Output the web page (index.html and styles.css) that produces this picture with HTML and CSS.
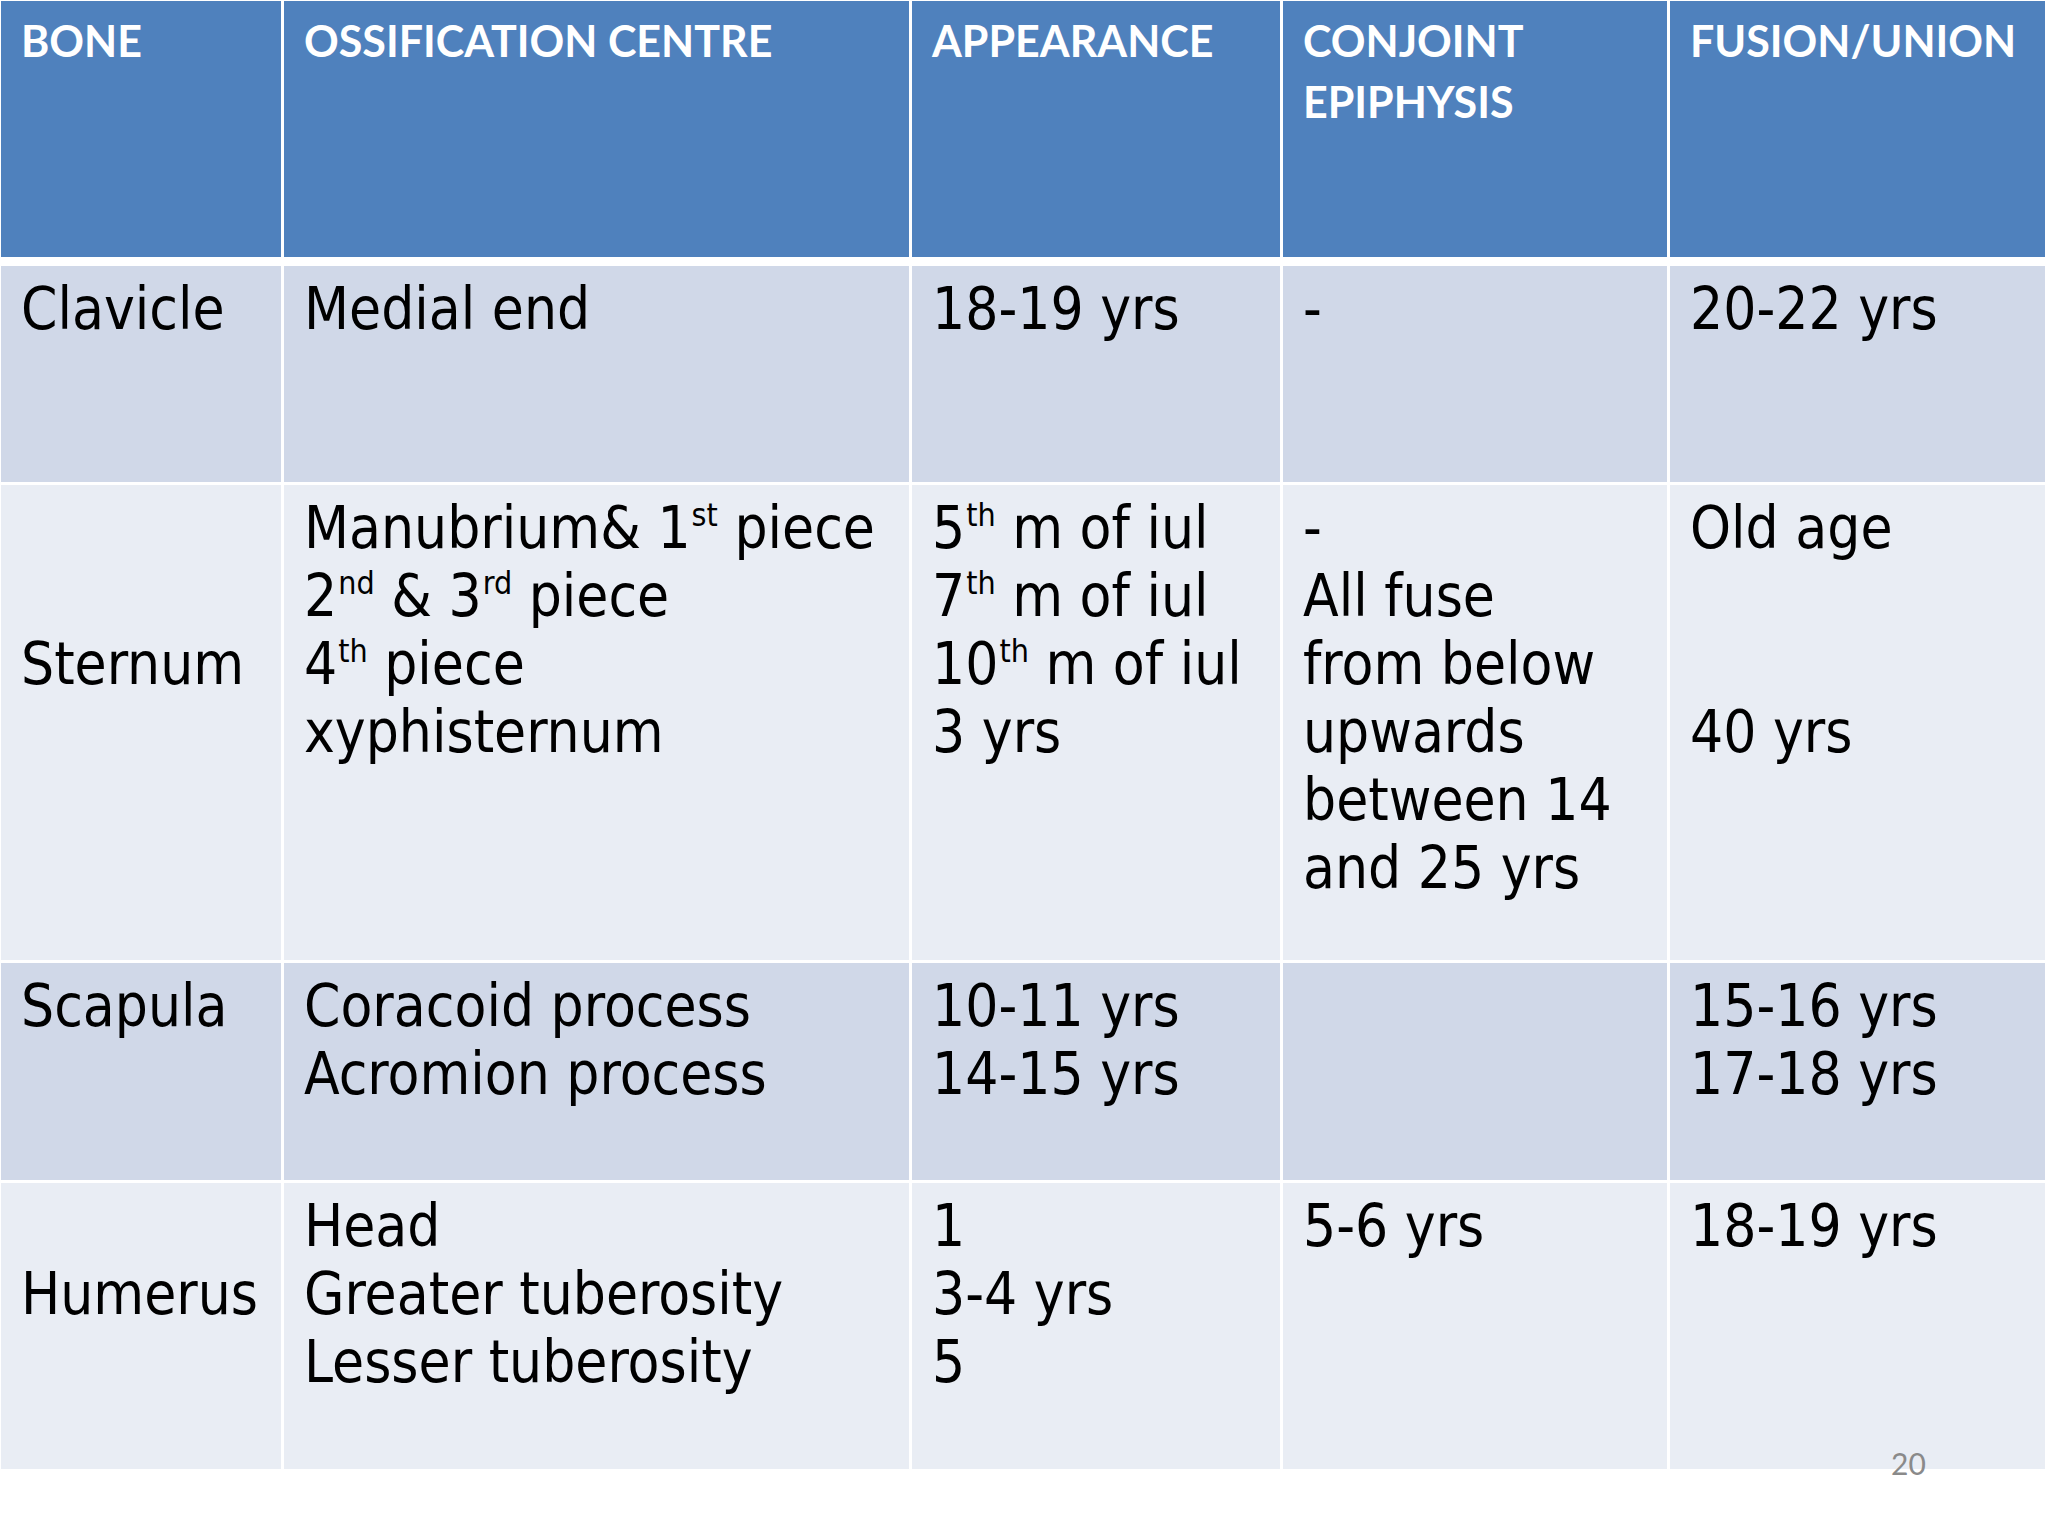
FILE: index.html
```html
<!DOCTYPE html>
<html lang="en">
<head>
<meta charset="utf-8">
<title>Ossification centres – upper limb and thorax</title>
<link rel="stylesheet" href="styles.css">
</head>
<body>
<main class="slide">
  <div class="table">
    <div class="cell head">BONE</div>
    <div class="cell head">OSSIFICATION CENTRE</div>
    <div class="cell head">APPEARANCE</div>
    <div class="cell head">CONJOINT EPIPHYSIS</div>
    <div class="cell head">FUSION/UNION</div>

    <div class="cell odd"><div class="line">Clavicle</div></div>
    <div class="cell odd"><div class="line">Medial end</div></div>
    <div class="cell odd"><div class="line">18-19 yrs</div></div>
    <div class="cell odd"><div class="line">-</div></div>
    <div class="cell odd"><div class="line">20-22 yrs</div></div>

    <div class="cell even skip-2"><div class="line">Sternum</div></div>
    <div class="cell even">
      <div class="line">Manubrium&amp; 1<sup class="sup">st</sup> piece</div>
      <div class="line">2<sup class="sup">nd</sup> &amp; 3<sup class="sup">rd</sup> piece</div>
      <div class="line">4<sup class="sup">th</sup> piece</div>
      <div class="line">xyphisternum</div>
    </div>
    <div class="cell even">
      <div class="line">5<sup class="sup">th</sup> m of iul</div>
      <div class="line">7<sup class="sup">th</sup> m of iul</div>
      <div class="line">10<sup class="sup">th</sup> m of iul</div>
      <div class="line">3 yrs</div>
    </div>
    <div class="cell even">
      <div class="line">-</div>
      <div class="line">All fuse</div>
      <div class="line">from below</div>
      <div class="line">upwards</div>
      <div class="line">between 14</div>
      <div class="line">and 25 yrs</div>
    </div>
    <div class="cell even">
      <div class="line">Old age</div>
      <div class="line blank"></div>
      <div class="line blank"></div>
      <div class="line">40 yrs</div>
    </div>

    <div class="cell odd"><div class="line">Scapula</div></div>
    <div class="cell odd">
      <div class="line">Coracoid process</div>
      <div class="line">Acromion process</div>
    </div>
    <div class="cell odd">
      <div class="line">10-11 yrs</div>
      <div class="line">14-15 yrs</div>
    </div>
    <div class="cell odd"></div>
    <div class="cell odd">
      <div class="line">15-16 yrs</div>
      <div class="line">17-18 yrs</div>
    </div>

    <div class="cell even skip-1"><div class="line">Humerus</div></div>
    <div class="cell even">
      <div class="line">Head</div>
      <div class="line">Greater tuberosity</div>
      <div class="line">Lesser tuberosity</div>
    </div>
    <div class="cell even">
      <div class="line">1</div>
      <div class="line">3-4 yrs</div>
      <div class="line">5</div>
    </div>
    <div class="cell even"><div class="line">5-6 yrs</div></div>
    <div class="cell even"><div class="line">18-19 yrs</div></div>
  </div>
  <div class="page-num">20</div>
</main>
</body>
</html>
```

FILE: styles.css
```css
html, body {
  margin: 0;
  padding: 0;
  background: #ffffff;
}

.slide {
  position: relative;
  width: 2048px;
  height: 1536px;
  padding: 1px 0 0 1px;
  box-sizing: border-box;
  background: #ffffff;
}

.table {
  display: grid;
  grid-template-columns: 280px 625px 368px 384px 375px;
  grid-template-rows: 262px 216px 475px 217px 286px;
  gap: 3px;
  background: #ffffff;
  width: max-content;
}

.cell {
  padding: 9px 8px 0 20px;
  box-sizing: border-box;
  font-family: "DejaVu Sans Condensed", "DejaVu Sans", sans-serif;
  font-stretch: condensed;
  font-size: 58px;
  line-height: 68px;
  color: #000000;
}

.head {
  background: #4f81bd;
  color: #ffffff;
  font-family: "Lato", "Liberation Sans", sans-serif;
  font-stretch: normal;
  font-weight: 700;
  font-size: 43px;
  line-height: 61px;
  padding-top: 9px;
  margin-bottom: 6px;
}

.odd {
  background: #d0d8e8;
}

.even {
  background: #e9edf4;
}

.line {
  white-space: nowrap;
  height: 68px;
}

.skip-1 {
  padding-top: 77px;
}

.skip-2 {
  padding-top: 145px;
}

.sup {
  font-size: 0.55em;
  line-height: 0;
  vertical-align: 0.7em;
  margin-left: 1px;
}

.page-num {
  position: absolute;
  left: 1891px;
  top: 1448px;
  font-family: "Lato", "Liberation Sans", sans-serif;
  font-size: 30px;
  line-height: 30px;
  color: #8a8a8a;
}
```
